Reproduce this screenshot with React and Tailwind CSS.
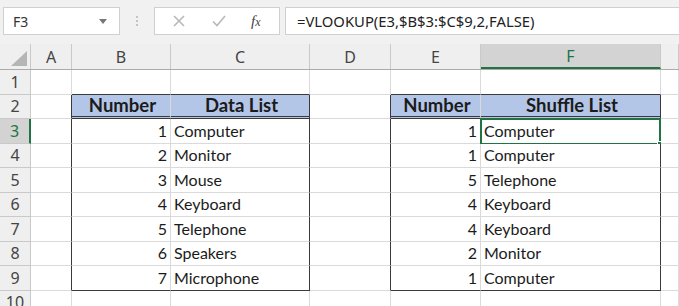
import React from "react";

const cols = [
  { key: "A", w: "w-[41px]" },
  { key: "B", w: "w-[99px]" },
  { key: "C", w: "w-[139px]" },
  { key: "D", w: "w-[81px]" },
  { key: "E", w: "w-[90px]" },
  { key: "F", w: "w-[180px]" },
  { key: "G", w: "flex-1" },
];

const left = [
  [1, "Computer"],
  [2, "Monitor"],
  [3, "Mouse"],
  [4, "Keyboard"],
  [5, "Telephone"],
  [6, "Speakers"],
  [7, "Microphone"],
];

const right = [
  [1, "Computer"],
  [1, "Computer"],
  [5, "Telephone"],
  [4, "Keyboard"],
  [4, "Keyboard"],
  [2, "Monitor"],
  [1, "Computer"],
];

const tableCols = ["B", "C", "E", "F"];

// work out border classes for a cell based on where the two tables sit
function cellClass(r, c) {
  let rightB = "border-r-[#dadada]";
  let bottom = "border-b border-b-[#dadada]";
  const inTable = r >= 2 && r <= 9;
  if (inTable && ["A", "C", "D", "F"].includes(c)) rightB = "border-r-[#3a3a3a]";
  if ((r === 1 || r === 9) && tableCols.includes(c)) bottom = "border-b border-b-[#3a3a3a]";
  if (r === 2 && tableCols.includes(c)) bottom = "border-b-[3px] border-double border-b-[#3a3a3a]";
  return `border-r ${rightB} ${bottom}`;
}

function Cell({ r, c }) {
  const isHead = r === 2 && tableCols.includes(c);
  let content = null;
  let align = "justify-start";
  if (r === 2) {
    if (c === "B" || c === "E") content = "Number";
    if (c === "C") content = "Data List";
    if (c === "F") content = "Shuffle List";
    align = "justify-center";
  }
  if (r >= 3 && r <= 9) {
    const i = r - 3;
    if (c === "B") content = left[i][0];
    if (c === "C") content = left[i][1];
    if (c === "E") content = right[i][0];
    if (c === "F") content = right[i][1];
    if (c === "B" || c === "E") align = "justify-end";
  }
  const w = cols.find((x) => x.key === c).w;
  return (
    <div
      className={`${w} relative flex items-center ${align} px-[3px] ${cellClass(r, c)} ${
        isHead ? "bg-[#b4c6e7] font-bold text-[18.5px] pl-[6px]" : "bg-white"
      }`}
    >
      {content !== null && <span className="leading-none">{content}</span>}
      {r === 3 && c === "F" && (
        <div className="absolute -left-px -top-px w-[181px] h-[27px] border-2 border-[#217346]">
          <div className="absolute -right-[4px] -bottom-[4px] w-[6px] h-[6px] bg-[#217346] border border-white" />
        </div>
      )}
    </div>
  );
}

export default function App() {
  const rows = [1, 2, 3, 4, 5, 6, 7, 8, 9, 10];
  return (
    <div
      className="w-[679px] h-[306px] overflow-hidden bg-white text-[#1b1b1b]"
      style={{ fontFamily: "Lato, 'Liberation Sans', sans-serif" }}
    >
      {/* formula bar */}
      <div
        className="h-[44px] bg-[#f1f1f1] flex items-start pt-[7px] text-[#333]"
        style={{ fontFamily: "'Noto Sans', 'Open Sans', sans-serif" }}
      >
        <div className="ml-[3px] w-[117px] h-[28px] bg-white border border-[#d0d0d0] flex items-center justify-between pl-[9px] pr-[12px] text-[14px]">
          <span>F3</span>
          <svg width="8" height="5" viewBox="0 0 8 5">
            <path d="M0 0h8L4 5z" fill="#777" />
          </svg>
        </div>
        <div className="w-[34px] h-[28px] flex flex-col items-center justify-center gap-[2px]">
          <span className="w-[2px] h-[2px] bg-[#c4c4c4]" />
          <span className="w-[2px] h-[2px] bg-[#c4c4c4]" />
          <span className="w-[2px] h-[2px] bg-[#c4c4c4]" />
        </div>
        <div className="w-[126px] h-[28px] bg-white border border-[#d0d0d0] flex items-center pl-[15px]">
          <svg width="12" height="12" viewBox="0 0 12 12" className="ml-[3px]">
            <path d="M1 1l10 10M11 1L1 11" stroke="#b8b8b8" strokeWidth="1.6" />
          </svg>
          <svg width="14" height="12" viewBox="0 0 14 12" className="ml-[27px]">
            <path d="M1 6.5l4 4L13 1" stroke="#b8b8b8" strokeWidth="1.6" fill="none" />
          </svg>
          <span
            className="ml-[25px] italic text-[15px] text-[#444]"
            style={{ fontFamily: "'Liberation Serif', serif" }}
          >
            f<span className="text-[12px]">x</span>
          </span>
        </div>
        <div className="ml-[5px] flex-1 h-[28px] bg-white border border-[#d0d0d0] border-r-0 flex items-center pl-[11px] text-[14.8px] text-[#222]">
          =VLOOKUP(E3,$B$3:$C$9,2,FALSE)
        </div>
      </div>

      {/* column headers */}
      <div
        className="flex h-[26px] bg-[#efefef] text-[#444] text-[16px] border-b border-[#ababab]"
        style={{ fontFamily: "'Noto Sans', 'Open Sans', sans-serif" }}
      >
        <div className="w-[31px] border-r border-[#c9c9c9] relative">
          <svg width="16" height="15" viewBox="0 0 16 15" className="absolute right-[3px] bottom-[3px]">
            <path d="M16 0V15H0z" fill="#b5b5b5" />
          </svg>
        </div>
        {cols.map((c) => (
          <div
            key={c.key}
            className={`${c.w} flex items-center justify-center border-r border-[#c9c9c9] ${
              c.key === "F" ? "bg-[#d3d3d3] text-[#217346] border-b-2 border-b-[#217346]" : ""
            }`}
          >
            {c.key === "G" ? "" : c.key}
          </div>
        ))}
      </div>

      {/* rows */}
      {rows.map((r) => (
        <div key={r} className="flex h-[24.5px] text-[16px]">
          <div
            className={`w-[31px] flex items-center justify-center text-[16px] border-b ${
              r === 3
                ? "bg-[#d3d3d3] text-[#217346] border-r-2 border-r-[#217346] border-b-[#c9c9c9]"
                : "bg-[#efefef] text-[#444] border-r border-[#c9c9c9]"
            }`}
            style={{ fontFamily: "'Noto Sans', 'Open Sans', sans-serif" }}
          >
            {r}
          </div>
          {cols.map((c) => (
            <Cell key={c.key} r={r} c={c.key} />
          ))}
        </div>
      ))}
    </div>
  );
}
